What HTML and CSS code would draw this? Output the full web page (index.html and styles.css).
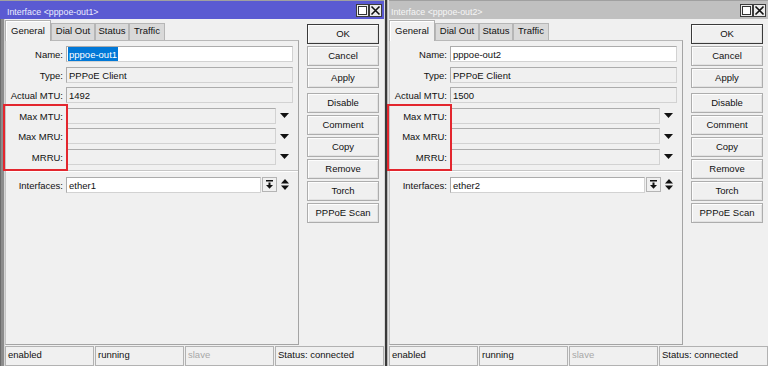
FILE: index.html
```html
<!DOCTYPE html>
<html>
<head>
<meta charset="utf-8">
<title>Interfaces</title>
<link rel="stylesheet" href="styles.css">
</head>
<body>
<div class="desk">
  <div class="win win-active">
    <div class="edge"></div>
    <div class="frame">
      <div class="titlebar">
        <span class="title">Interface &lt;pppoe-out1&gt;</span>
        <div class="tbtns">
          <span class="tbtn"><svg width="11" height="11" viewBox="0 0 11 11"><rect x="1.5" y="1.5" width="8" height="8" fill="#fff" stroke="#333" stroke-width="1"/></svg></span>
          <span class="tbtn"><svg width="11" height="11" viewBox="0 0 11 11"><path d="M1.5 1.5 L9.5 9.5 M9.5 1.5 L1.5 9.5" stroke="#111" stroke-width="1.6"/></svg></span>
        </div>
      </div>
      <div class="content">
        <div class="left">
          <div class="tabs">
            <span class="tab active t1">General</span>
            <span class="tab t2">Dial Out</span>
            <span class="tab t3">Status</span>
            <span class="tab t4">Traffic</span>
          </div>
          <div class="panel">
            <div class="row"><span class="lbl">Name:</span><div class="field white w-full"><span class="sel">pppoe-out1</span></div></div>
            <div class="row"><span class="lbl">Type:</span><div class="field w-full">PPPoE Client</div></div>
            <div class="row"><span class="lbl">Actual MTU:</span><div class="field w-full">1492</div></div>
            <div class="row"><span class="lbl">Max MTU:</span><div class="field w-drop"></div><span class="drop"><svg width="9" height="5" viewBox="0 0 9 5"><polygon points="0,0 9,0 4.5,5" fill="#111"/></svg></span></div>
            <div class="row"><span class="lbl">Max MRU:</span><div class="field w-drop"></div><span class="drop"><svg width="9" height="5" viewBox="0 0 9 5"><polygon points="0,0 9,0 4.5,5" fill="#111"/></svg></span></div>
            <div class="row"><span class="lbl">MRRU:</span><div class="field w-drop"></div><span class="drop"><svg width="9" height="5" viewBox="0 0 9 5"><polygon points="0,0 9,0 4.5,5" fill="#111"/></svg></span></div>
            <div class="sep"></div>
            <div class="row"><span class="lbl">Interfaces:</span><div class="field white w-if">ether1</div><span class="ibtn"><svg width="7" height="9" viewBox="0 0 7 9"><rect x="0" y="0" width="7" height="1.5" fill="#111"/><rect x="2.5" y="2.5" width="2" height="2.5" fill="#111"/><polygon points="0,5 7,5 3.5,8.8" fill="#111"/></svg></span><span class="updown"><svg width="8" height="11" viewBox="0 0 8 11"><polygon points="0,4.5 8,4.5 4,0" fill="#111"/><polygon points="0,6.5 8,6.5 4,11" fill="#111"/></svg></span></div>
            <div class="mark"></div>
          </div>
        </div>
        <div class="buttons">
          <div class="btn ok">OK</div>
          <div class="btn">Cancel</div>
          <div class="btn">Apply</div>
          <div class="btn gap">Disable</div>
          <div class="btn">Comment</div>
          <div class="btn">Copy</div>
          <div class="btn">Remove</div>
          <div class="btn">Torch</div>
          <div class="btn">PPPoE Scan</div>
        </div>
      </div>
      <div class="statusbar">
        <div class="cell">enabled</div>
        <div class="cell">running</div>
        <div class="cell dim">slave</div>
        <div class="cell last">Status: connected</div>
      </div>
    </div>
  </div>

  <div class="win win-inactive">
    <div class="edge"></div>
    <div class="frame">
      <div class="titlebar">
        <span class="title">Interface &lt;pppoe-out2&gt;</span>
        <div class="tbtns">
          <span class="tbtn"><svg width="11" height="11" viewBox="0 0 11 11"><rect x="1.5" y="1.5" width="8" height="8" fill="#fff" stroke="#333" stroke-width="1"/></svg></span>
          <span class="tbtn"><svg width="11" height="11" viewBox="0 0 11 11"><path d="M1.5 1.5 L9.5 9.5 M9.5 1.5 L1.5 9.5" stroke="#111" stroke-width="1.6"/></svg></span>
        </div>
      </div>
      <div class="content">
        <div class="left">
          <div class="tabs">
            <span class="tab active t1">General</span>
            <span class="tab t2">Dial Out</span>
            <span class="tab t3">Status</span>
            <span class="tab t4">Traffic</span>
          </div>
          <div class="panel">
            <div class="row"><span class="lbl">Name:</span><div class="field white w-full">pppoe-out2</div></div>
            <div class="row"><span class="lbl">Type:</span><div class="field w-full">PPPoE Client</div></div>
            <div class="row"><span class="lbl">Actual MTU:</span><div class="field w-full">1500</div></div>
            <div class="row"><span class="lbl">Max MTU:</span><div class="field w-drop"></div><span class="drop"><svg width="9" height="5" viewBox="0 0 9 5"><polygon points="0,0 9,0 4.5,5" fill="#111"/></svg></span></div>
            <div class="row"><span class="lbl">Max MRU:</span><div class="field w-drop"></div><span class="drop"><svg width="9" height="5" viewBox="0 0 9 5"><polygon points="0,0 9,0 4.5,5" fill="#111"/></svg></span></div>
            <div class="row"><span class="lbl">MRRU:</span><div class="field w-drop"></div><span class="drop"><svg width="9" height="5" viewBox="0 0 9 5"><polygon points="0,0 9,0 4.5,5" fill="#111"/></svg></span></div>
            <div class="sep"></div>
            <div class="row"><span class="lbl">Interfaces:</span><div class="field white w-if">ether2</div><span class="ibtn"><svg width="7" height="9" viewBox="0 0 7 9"><rect x="0" y="0" width="7" height="1.5" fill="#111"/><rect x="2.5" y="2.5" width="2" height="2.5" fill="#111"/><polygon points="0,5 7,5 3.5,8.8" fill="#111"/></svg></span><span class="updown"><svg width="8" height="11" viewBox="0 0 8 11"><polygon points="0,4.5 8,4.5 4,0" fill="#111"/><polygon points="0,6.5 8,6.5 4,11" fill="#111"/></svg></span></div>
            <div class="mark"></div>
          </div>
        </div>
        <div class="buttons">
          <div class="btn ok">OK</div>
          <div class="btn">Cancel</div>
          <div class="btn">Apply</div>
          <div class="btn gap">Disable</div>
          <div class="btn">Comment</div>
          <div class="btn">Copy</div>
          <div class="btn">Remove</div>
          <div class="btn">Torch</div>
          <div class="btn">PPPoE Scan</div>
        </div>
      </div>
      <div class="statusbar">
        <div class="cell">enabled</div>
        <div class="cell">running</div>
        <div class="cell dim">slave</div>
        <div class="cell last">Status: connected</div>
      </div>
    </div>
  </div>
</div>
</body>
</html>
```

FILE: styles.css
```css
html, body {
  margin: 0;
  padding: 0;
}
body {
  width: 768px;
  height: 366px;
  overflow: hidden;
  font-family: "Liberation Sans", Arial, sans-serif;
  font-size: 9.5px;
  color: #111;
  background: #f0f0f0;
}
.desk {
  display: flex;
  height: 366px;
}
.win {
  width: 384px;
  flex: none;
  display: flex;
  background: #f0f0f0;
}
.edge {
  width: 5px;
  flex: none;
}
.win-active .edge {
  background:
    linear-gradient(#a0a0a0 0 1px, #5a5ad2 1px 19px, transparent 19px),
    linear-gradient(to right, #6c6c6c 0 1px, #8c8c8c 1px 4px, #d6d6d6 4px 5px);
}
.win-inactive .edge {
  background: linear-gradient(to right, #d8d8d8 0 1px, #3a3a3a 1px 3px, #b8b8b8 3px 4px, #e2e2e2 4px 5px);
}
.frame {
  width: 379px;
  display: flex;
  flex-direction: column;
}
.titlebar {
  height: 18px;
  border-top: 1px solid #a0a0a0;
  margin-bottom: 1px;
  display: flex;
  align-items: center;
  justify-content: space-between;
  padding: 0 2px;
}
.win-active .titlebar {
  background: #5a5ad2;
  color: #ececff;
}
.win-inactive .titlebar {
  background: #c0c0c0;
  color: #f6f6f6;
}
.title {
  font-size: 8.8px;
  line-height: 12px;
  align-self: flex-end;
  padding-bottom: 1px;
}
.tbtns {
  display: flex;
}
.tbtn {
  width: 13px;
  height: 13px;
  box-sizing: border-box;
  border: 1px solid #3c3c3c;
  background: #ececec;
  display: flex;
  align-items: center;
  justify-content: center;
}
.content {
  flex: 1;
  display: flex;
}
.left {
  width: 294px;
  display: flex;
  flex-direction: column;
}
.tabs {
  height: 20px;
  display: flex;
  align-items: flex-end;
}
.tab {
  box-sizing: border-box;
  height: 17px;
  line-height: 13px;
  text-align: center;
  background: #d9d9d9;
  border: 1px solid #b6b6b6;
  border-bottom: none;
  white-space: nowrap;
}
.tab.active {
  height: 21px;
  margin-bottom: -1px;
  padding-top: 3px;
  background: #f0f0f0;
  border-color: #b0b0b0;
  box-shadow: inset 1px 1px #fff;
  position: relative;
  z-index: 1;
}
.t1 { width: 46px; }
.t2 { width: 44px; }
.t3 { width: 34px; }
.t4 { width: 36px; }
.panel {
  flex: 1;
  box-sizing: border-box;
  border: 1px solid;
  border-color: #b8b8b8 #a4a4a4 #a4a4a4 #c4c4c4;
  padding: 5px 5px 0 0;
  position: relative;
}
.row {
  display: flex;
  align-items: flex-start;
  height: 16px;
  margin-bottom: 4.6px;
}
.lbl {
  width: 57px;
  margin-right: 3px;
  text-align: right;
  white-space: nowrap;
  line-height: 15px;
  padding-top: 1px;
}
.field {
  height: 16px;
  box-sizing: border-box;
  border: 1px solid;
  border-color: #acacac #d2d2d2 #d2d2d2 #acacac;
  background: #f0f0f0;
  padding: 1px 0 0 2px;
  line-height: 13px;
  white-space: nowrap;
  overflow: hidden;
}
.field.white {
  background: #fff;
}
.w-full { width: 227px; }
.w-drop { width: 210px; }
.w-if { width: 195px; }
.sel {
  display: inline-block;
  background: #0078d7;
  color: #fff;
  margin: -1px 0 0 -1px;
  padding: 1px 1px 0;
  height: 13px;
  line-height: 13px;
}
.drop {
  width: 17px;
  height: 16px;
  display: flex;
  align-items: center;
  justify-content: center;
}
.ibtn {
  width: 15px;
  height: 15px;
  margin-left: 1px;
  box-sizing: border-box;
  border: 1px solid #b4b4b4;
  background: #f0f0f0;
  display: flex;
  align-items: center;
  justify-content: center;
}
.updown {
  width: 16px;
  height: 15px;
  display: flex;
  align-items: center;
  justify-content: center;
}
.sep {
  border-top: 1px solid #c6c6c6;
  border-bottom: 1px solid #fff;
  margin: 0 -5px 5.4px 0;
}
.mark {
  position: absolute;
  left: -3px;
  top: 63px;
  width: 65px;
  height: 67px;
  box-sizing: border-box;
  border: 2px solid #e3262e;
}
.buttons {
  width: 72px;
  margin-left: 8px;
  padding-top: 4px;
  display: flex;
  flex-direction: column;
  gap: 2px;
}
.btn {
  height: 20px;
  box-sizing: border-box;
  border: 1px solid #adadad;
  background: #f0f0f0;
  box-shadow: inset 1px 1px #fdfdfd, inset -1px -1px #e2e2e2;
  text-align: center;
  line-height: 18px;
  white-space: nowrap;
}
.btn.ok {
  border-color: #3a3a3a;
}
.btn.gap {
  margin-top: 3px;
}
.statusbar {
  height: 21px;
  box-sizing: border-box;
  padding-top: 1px;
  display: flex;
  gap: 1px;
}
.cell {
  width: 89px;
  height: 20px;
  box-sizing: border-box;
  border: 1px solid #b2b2b2;
  padding-left: 2px;
  line-height: 16px;
  white-space: nowrap;
}
.cell.last {
  flex: 1;
}
.cell.dim {
  color: #a8a8a8;
}
```
